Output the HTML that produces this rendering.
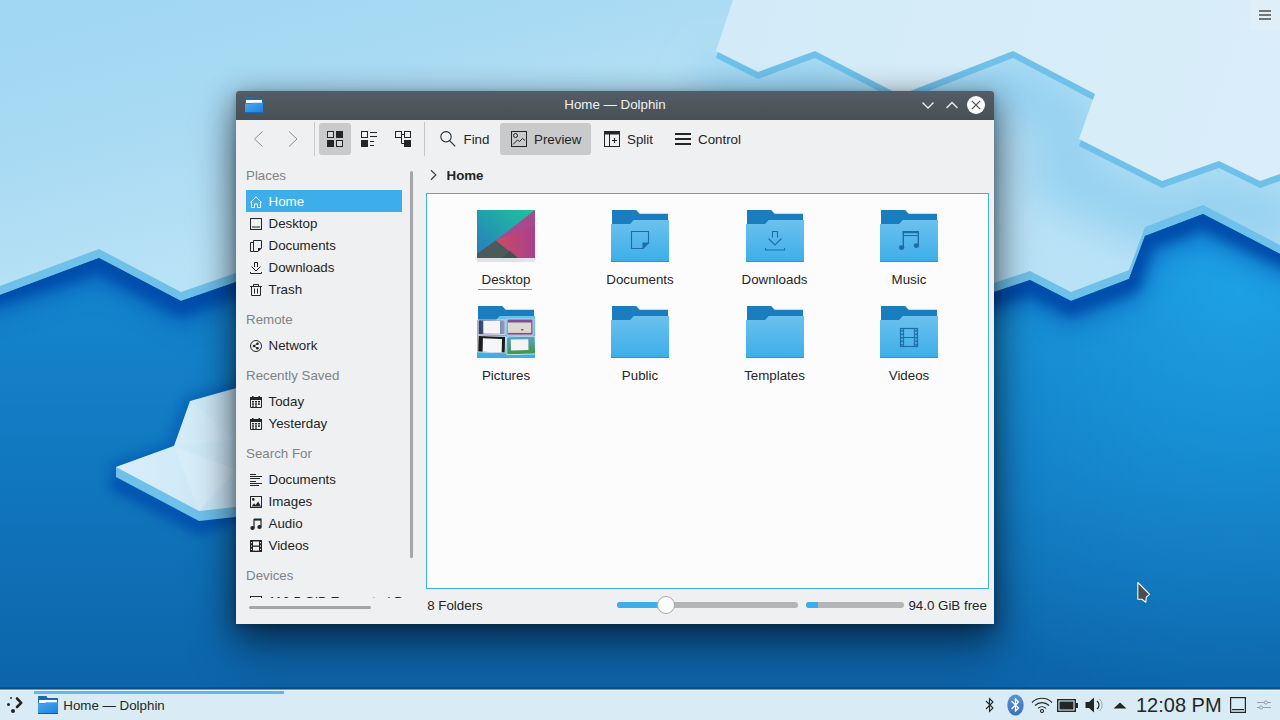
<!DOCTYPE html>
<html><head><meta charset="utf-8">
<style>
*{margin:0;padding:0;box-sizing:border-box}
html,body{width:1280px;height:720px;overflow:hidden;background:#1185d0}
body{position:relative;font-family:"Liberation Sans",sans-serif;font-size:13.33px;color:#232627}
.abs{position:absolute}
#wall{position:absolute;left:0;top:0}
#win{position:absolute;left:236px;top:91px;width:758px;height:533px;background:#eff0f1;border-radius:3px 3px 0 0;box-shadow:0 8px 30px 2px rgba(0,0,0,0.45),0 28px 48px rgba(0,10,30,0.35),0 2px 6px rgba(0,0,0,0.2)}
#title{position:absolute;left:0;top:0;width:758px;height:29px;background:linear-gradient(#545d65,#475057);border-radius:3px 3px 0 0}
.t{position:absolute;white-space:nowrap;line-height:16px;height:16px}
#taskbar{position:absolute;left:0;top:689px;width:1280px;height:31px;background:#d9ecf5}
</style></head><body>
<svg id="wall" width="1280" height="720" viewBox="0 0 1280 720">
<defs>
<linearGradient id="sky" gradientUnits="userSpaceOnUse" x1="0" y1="0" x2="80" y2="300">
<stop offset="0" stop-color="#a0d6f1"/><stop offset="0.5" stop-color="#a8daf3"/><stop offset="1" stop-color="#b9e2f6"/>
</linearGradient>
<linearGradient id="skyR" gradientUnits="userSpaceOnUse" x1="990" y1="60" x2="1250" y2="260">
<stop offset="0" stop-color="#a5d8f2"/><stop offset="1" stop-color="#b3def4"/>
</linearGradient>
<linearGradient id="plat" gradientUnits="userSpaceOnUse" x1="720" y1="0" x2="1280" y2="180">
<stop offset="0" stop-color="#d3ebf8"/><stop offset="1" stop-color="#d9eef9"/>
</linearGradient>
<linearGradient id="sea" gradientUnits="userSpaceOnUse" x1="0" y1="260" x2="0" y2="690">
<stop offset="0" stop-color="#1489d2"/><stop offset="1" stop-color="#0e6cb4"/>
</linearGradient>
<linearGradient id="seaV" gradientUnits="userSpaceOnUse" x1="0" y1="250" x2="0" y2="690">
<stop offset="0" stop-color="#000" stop-opacity="0"/><stop offset="0.5" stop-color="#002a5a" stop-opacity="0.04"/><stop offset="1" stop-color="#002a5a" stop-opacity="0.12"/>
</linearGradient>
<radialGradient id="seaRight" gradientUnits="userSpaceOnUse" cx="1240" cy="290" r="420">
<stop offset="0" stop-color="#1ea3e7" stop-opacity="0.95"/><stop offset="0.5" stop-color="#1c9de2" stop-opacity="0.5"/><stop offset="1" stop-color="#1c9de2" stop-opacity="0"/>
</radialGradient>
<linearGradient id="floe" gradientUnits="userSpaceOnUse" x1="116" y1="0" x2="236" y2="0">
<stop offset="0" stop-color="#daeefa"/><stop offset="1" stop-color="#c8e6f6"/>
</linearGradient>
<clipPath id="seaclip"><polygon points="0,295 99,258 181,301 236,282 600,259 994,292 1030,280 1071,301 1129,279 1145,236 1203,214 1280,254 1280,720 0,720"/></clipPath>
<filter id="blur12" filterUnits="userSpaceOnUse" x="-100" y="0" width="1480" height="720"><feGaussianBlur stdDeviation="12"/></filter>
<filter id="blur20" filterUnits="userSpaceOnUse" x="-100" y="-100" width="1480" height="920"><feGaussianBlur stdDeviation="20"/></filter>
<filter id="blur6" filterUnits="userSpaceOnUse" x="-100" y="0" width="1480" height="720"><feGaussianBlur stdDeviation="6"/></filter>
</defs>
<rect width="1280" height="720" fill="url(#sky)"/>
<polyline fill="none" stroke="#96d1f0" stroke-width="60" stroke-linejoin="round" filter="url(#blur20)" points="700,85 758,105 815,84 900,128 1013,84 1070,120 1060,175 1162,220 1219,200 1260,220 1300,212"/>
<!-- upper plateau band + surface -->
<polygon fill="#6fc1ea" points="733,7 1280,7 1280,181 1260,188 1219,168 1162,188 1079,146 1095,101 1013,58 900,102 815,58 758,79 716,58"/>
<polygon fill="url(#plat)" points="733,0 1280,0 1280,174 1260,181 1219,161 1162,181 1079,139 1095,94 1013,51 900,95 815,51 758,72 716,51"/>
<!-- sea band -->
<polygon fill="#6fc1ea" points="0,286 99,249 181,292 236,273 600,250 994,283 1030,271 1071,292 1129,270 1145,227 1203,205 1280,245 1280,720 0,720"/>
<g clip-path="url(#seaclip)">
<rect x="0" y="200" width="1280" height="520" fill="url(#sea)"/>
<rect x="0" y="200" width="1280" height="520" fill="url(#seaRight)"/>
<rect x="0" y="200" width="1280" height="520" fill="url(#seaV)"/>
<polyline fill="none" stroke="#0449a8" stroke-width="22" filter="url(#blur6)" points="-20,300 99,262 181,305 236,286 600,263 994,296 1030,284 1071,305 1129,283 1145,240 1203,218 1300,264"/><polyline fill="none" stroke="#0552b0" stroke-width="30" opacity="0.5" filter="url(#blur12)" points="-20,305 99,268 181,311 236,292 600,269 994,302 1030,290 1071,311 1129,289 1145,246 1203,224 1300,270"/>
<polyline fill="none" stroke="#0650ad" stroke-width="18" filter="url(#blur6)" opacity="0.9" points="112,480 199,525 300,492"/><polyline fill="none" stroke="#0650ad" stroke-width="14" filter="url(#blur6)" opacity="0.55" points="112,470 174,448 190,403 300,372"/>
</g>
<!-- floe -->
<polygon fill="#6fc1ea" points="116,467 116,477 199,521 300,510 300,420 174,446"/>
<polygon fill="url(#floe)" points="116,467 174,446 190,401 300,370 300,500 199,511"/><polygon fill="#ffffff" opacity="0.18" points="174,446 236,470 199,511"/><polygon fill="#ffffff" opacity="0.1" points="174,446 190,401 236,440"/>
</svg>

<!-- top right toolbox -->
<div class="abs" style="left:1250px;top:0;width:30px;height:30px;background:rgba(225,238,246,0.75)"></div>
<div class="abs" style="left:1259px;top:10px;width:12px;height:2px;background:#6e7579"></div>
<div class="abs" style="left:1259px;top:14px;width:12px;height:2px;background:#6e7579"></div>
<div class="abs" style="left:1259px;top:18px;width:12px;height:2px;background:#6e7579"></div>

<div id="win">
  <div id="title">
    <svg class="abs" style="left:9px;top:6px" width="18" height="16" viewBox="0 0 18 16">
      <defs><linearGradient id="tfi" x1="0" y1="0" x2="1" y2="1"><stop offset="0" stop-color="#4aa9ef"/><stop offset="1" stop-color="#1c7fdf"/></linearGradient></defs>
      <path d="M0,0 H8 L9,1.5 H18 V7 H0 Z" fill="#1a6fb3"/>
      <rect x="1" y="3" width="16" height="3" fill="#fcfcfc"/>
      <path d="M0,6.5 H7 L7.5,5.8 H18 V16 H0 Z" fill="url(#tfi)"/>
      <rect x="0" y="15" width="18" height="1" fill="#1a68b0"/>
    </svg>
    <div class="t" style="left:279px;width:200px;text-align:center;top:6px;color:#eff0f1">Home — Dolphin</div>
    <svg class="abs" style="left:684px;top:8px" width="16" height="14" viewBox="0 0 16 14"><path d="M2.5,3.5 L8,9 L13.5,3.5" fill="none" stroke="#eff0f1" stroke-width="1.3"/></svg>
    <svg class="abs" style="left:708px;top:8px" width="16" height="14" viewBox="0 0 16 14"><path d="M2.5,9 L8,3.5 L13.5,9" fill="none" stroke="#eff0f1" stroke-width="1.3"/></svg>
    <svg class="abs" style="left:730px;top:4px" width="20" height="20" viewBox="0 0 20 20"><circle cx="10" cy="10" r="9" fill="#fcfcfc"/><path d="M5.8,5.8 L14.2,14.2 M14.2,5.8 L5.8,14.2" stroke="#475057" stroke-width="1.2"/></svg>
  </div>
  <!-- toolbar -->
  <svg class="abs" style="left:16px;top:40px" width="14" height="16" viewBox="0 0 14 16"><path d="M10.5,0.5 L2.5,8 L10.5,15.5" fill="none" stroke="#8c8f91" stroke-width="1"/></svg>
  <svg class="abs" style="left:50px;top:40px" width="14" height="16" viewBox="0 0 14 16"><path d="M3,0.5 L11,8 L3,15.5" fill="none" stroke="#8c8f91" stroke-width="1"/></svg>
  <div class="abs" style="left:78px;top:31px;width:1px;height:34px;background:#c4c6c8"></div>
  <div class="abs" style="left:83px;top:32px;width:32px;height:32px;background:#c9cacb;border-radius:3px"></div>
  <svg class="abs" style="left:91px;top:40px" width="16" height="16" viewBox="0 0 16 16"><rect x="0.5" y="0.5" width="6" height="6" fill="#d6d7d8" stroke="#232627"/><rect x="9" y="0" width="7" height="7" fill="#232627"/><rect x="0" y="9" width="7" height="7" fill="#232627"/><rect x="9.5" y="9.5" width="6" height="6" fill="#d6d7d8" stroke="#232627"/></svg>
  <svg class="abs" style="left:125px;top:40px" width="16" height="16" viewBox="0 0 16 16"><rect x="0.5" y="0.5" width="6" height="6" fill="#eff0f1" stroke="#232627"/><rect x="0" y="9" width="7" height="7" fill="#232627"/><path d="M9,1.5 H16 M9,5.5 H16 M9,10.5 H13 M9,14.5 H13" stroke="#232627"/></svg>
  <svg class="abs" style="left:159px;top:40px" width="16" height="16" viewBox="0 0 16 16"><rect x="0.5" y="0.5" width="6" height="6" fill="#eff0f1" stroke="#232627"/><rect x="9.5" y="0.5" width="6" height="6" fill="#eff0f1" stroke="#232627"/><rect x="9" y="9" width="7" height="7" fill="#232627"/><path d="M7,3.5 H9 M6.5,3.5 V12.5 H9" fill="none" stroke="#232627"/></svg>
  <div class="abs" style="left:188px;top:31px;width:1px;height:34px;background:#c4c6c8"></div>
  <svg class="abs" style="left:204px;top:40px" width="16" height="16" viewBox="0 0 16 16"><circle cx="6" cy="5.8" r="5.2" fill="none" stroke="#232627" stroke-width="1.05"/><path d="M9.6,9.6 L15.2,15.3" stroke="#232627" stroke-width="1.1"/></svg>
<div class="t" style="left:227.5px;top:41px;">Find</div>
  <div class="abs" style="left:264px;top:32px;width:91px;height:32px;background:#c9cacb;border-radius:3px"></div>
  <svg class="abs" style="left:275px;top:40px" width="16" height="16" viewBox="0 0 16 16"><rect x="0.5" y="0.5" width="15" height="15" fill="none" stroke="#232627"/><circle cx="4.5" cy="4.5" r="2" fill="none" stroke="#232627"/><path d="M2,13.5 L6.5,9 L8.5,10.5 L11.5,7.5 L14,9.5" fill="none" stroke="#232627"/></svg>
<div class="t" style="left:298px;top:41px;">Preview</div>
  <svg class="abs" style="left:368px;top:40px" width="16" height="16" viewBox="0 0 16 16"><rect x="0.5" y="0.5" width="15" height="15" fill="none" stroke="#232627"/><rect x="0" y="0" width="16" height="3.5" fill="#232627"/><path d="M5.5,3 V16" stroke="#232627"/><path d="M10.5,7 V12 M8,9.5 H13" stroke="#232627" stroke-width="1.1"/></svg>
<div class="t" style="left:391px;top:41px;">Split</div>
  <svg class="abs" style="left:439px;top:40px" width="16" height="16" viewBox="0 0 16 16"><rect x="0" y="2" width="16" height="2" fill="#232627"/><rect x="0" y="7" width="16" height="2" fill="#232627"/><rect x="0" y="12" width="16" height="2" fill="#232627"/></svg>
<div class="t" style="left:462px;top:41px;">Control</div>
  <!-- sidebar -->
<div class="abs" style="left:0;top:0;width:170px;height:507px;overflow:hidden"><div class="t" style="left:10px;top:77px;color:#7f8385">Places</div><div class="abs" style="left:10px;top:99px;width:156px;height:22px;background:#3daee9"></div><svg class="abs" style="left:14px;top:105px" width="12" height="12" viewBox="0 0 12 12"><path d="M0.5,6.5 L6,0.8 L11.5,6.5 M1.5,5.5 V11.5 H4.5 V8 H7.5 V11.5 H10.5 V5.5" fill="none" stroke="#fcfcfc" stroke-width="1"/></svg><div class="t" style="left:32.5px;top:103px;color:#fcfcfc">Home</div><svg class="abs" style="left:14px;top:127px" width="12" height="12" viewBox="0 0 12 12"><rect x="0.5" y="0.5" width="11" height="11" fill="none" stroke="#232627"/><rect x="2" y="8.5" width="8" height="1" fill="#232627"/></svg><div class="t" style="left:32.5px;top:125px;color:#232627">Desktop</div><svg class="abs" style="left:14px;top:149px" width="12" height="12" viewBox="0 0 12 12"><path d="M0.5,2.5 H3 M0.5,2.5 V11.5 H3.5" fill="none" stroke="#232627"/><path d="M3.5,0.5 H11.5 V8 L8,11.5 H3.5 Z" fill="none" stroke="#232627"/><path d="M11.5,8 L8,11.5 V8 Z" fill="#232627"/></svg><div class="t" style="left:32.5px;top:147px;color:#232627">Documents</div><svg class="abs" style="left:14px;top:171px" width="12" height="12" viewBox="0 0 12 12"><path d="M4.5,0.5 H7.5 V5 M4.5,0.5 V5 M1.5,4.5 L6,9 L10.5,4.5 M0.5,10 V11.5 H11.5 V10" fill="none" stroke="#232627"/></svg><div class="t" style="left:32.5px;top:169px;color:#232627">Downloads</div><svg class="abs" style="left:14px;top:193px" width="12" height="12" viewBox="0 0 12 12"><path d="M0,2.5 H12 M3.5,2.5 V0.5 H8.5 V2.5 M1.5,2.5 V11.5 H10.5 V2.5 M4.5,4.5 V9.5 M7.5,4.5 V9.5" fill="none" stroke="#232627"/></svg><div class="t" style="left:32.5px;top:191px;color:#232627">Trash</div><div class="t" style="left:10px;top:221px;color:#7f8385">Remote</div><svg class="abs" style="left:14px;top:249px" width="12" height="12" viewBox="0 0 12 12"><circle cx="6" cy="6" r="5.5" fill="none" stroke="#232627"/><circle cx="4" cy="6" r="1.3" fill="#232627"/><circle cx="7.5" cy="3.8" r="1.3" fill="#232627"/><circle cx="7.5" cy="8.2" r="1.3" fill="#232627"/><path d="M4,6 L7.5,3.8 M4,6 L7.5,8.2" stroke="#232627" stroke-width="0.8"/></svg><div class="t" style="left:32.5px;top:247px;color:#232627">Network</div><div class="t" style="left:10px;top:277px;color:#7f8385">Recently Saved</div><svg class="abs" style="left:14px;top:305px" width="12" height="12" viewBox="0 0 12 12"><path d="M0.5,1.5 H11.5 V11.5 H0.5 Z" fill="none" stroke="#232627"/><rect x="0" y="1" width="12" height="3" fill="#232627"/><rect x="2" y="0" width="1.5" height="2" fill="#232627"/><rect x="8.5" y="0" width="1.5" height="2" fill="#232627"/><g fill="#232627"><rect x="2" y="5" width="2" height="1.5"/><rect x="5" y="5" width="2" height="1.5"/><rect x="8" y="5" width="2" height="1.5"/><rect x="2" y="7.3" width="2" height="1.5"/><rect x="5" y="7.3" width="2" height="1.5"/><rect x="8" y="7.3" width="2" height="1.5"/><rect x="2" y="9.5" width="2" height="1.2"/><rect x="5" y="9.5" width="2" height="1.2"/></g></svg><div class="t" style="left:32.5px;top:303px;color:#232627">Today</div><svg class="abs" style="left:14px;top:327px" width="12" height="12" viewBox="0 0 12 12"><path d="M0.5,1.5 H11.5 V11.5 H0.5 Z" fill="none" stroke="#232627"/><rect x="0" y="1" width="12" height="3" fill="#232627"/><rect x="2" y="0" width="1.5" height="2" fill="#232627"/><rect x="8.5" y="0" width="1.5" height="2" fill="#232627"/><g fill="#232627"><rect x="2" y="5" width="2" height="1.5"/><rect x="5" y="5" width="2" height="1.5"/><rect x="8" y="5" width="2" height="1.5"/><rect x="2" y="7.3" width="2" height="1.5"/><rect x="5" y="7.3" width="2" height="1.5"/><rect x="8" y="7.3" width="2" height="1.5"/><rect x="2" y="9.5" width="2" height="1.2"/><rect x="5" y="9.5" width="2" height="1.2"/></g></svg><div class="t" style="left:32.5px;top:325px;color:#232627">Yesterday</div><div class="t" style="left:10px;top:355px;color:#7f8385">Search For</div><svg class="abs" style="left:14px;top:383px" width="12" height="12" viewBox="0 0 12 12"><path d="M0,0.5 H6 M0,2.5 H12 M0,4.5 H10 M0,7.5 H6 M0,9.5 H12 M0,11.5 H9" stroke="#232627" fill="none"/></svg><div class="t" style="left:32.5px;top:381px;color:#232627">Documents</div><svg class="abs" style="left:14px;top:405px" width="12" height="12" viewBox="0 0 12 12"><rect x="0.5" y="0.5" width="11" height="11" fill="none" stroke="#232627"/><circle cx="3.3" cy="3.4" r="1.3" fill="#232627"/><path d="M1.5,10.5 L4,7.3 L5.6,9 L8.2,5.5 L11,10.5 Z" fill="#232627"/></svg><div class="t" style="left:32.5px;top:403px;color:#232627">Images</div><svg class="abs" style="left:14px;top:427px" width="12" height="12" viewBox="0 0 12 12"><path d="M4,1 H11 V9 M4,1 V10" stroke="#232627" fill="none" stroke-width="1.2"/><rect x="4" y="1" width="7" height="1.6" fill="#232627"/><ellipse cx="2.5" cy="10" rx="2.2" ry="1.9" fill="#232627"/><ellipse cx="9.5" cy="9" rx="2.2" ry="1.9" fill="#232627"/></svg><div class="t" style="left:32.5px;top:425px;color:#232627">Audio</div><svg class="abs" style="left:14px;top:449px" width="12" height="12" viewBox="0 0 12 12"><rect x="0" y="0" width="12" height="12" fill="#232627"/><rect x="3" y="1.5" width="6" height="4" fill="#eff0f1"/><rect x="3" y="6.8" width="6" height="3.8" fill="#eff0f1"/><g fill="#eff0f1"><rect x="1" y="2" width="1" height="1.2"/><rect x="1" y="5.4" width="1" height="1.2"/><rect x="1" y="8.8" width="1" height="1.2"/><rect x="10" y="2" width="1" height="1.2"/><rect x="10" y="5.4" width="1" height="1.2"/><rect x="10" y="8.8" width="1" height="1.2"/></g></svg><div class="t" style="left:32.5px;top:447px;color:#232627">Videos</div><div class="t" style="left:10px;top:477px;color:#7f8385">Devices</div><svg class="abs" style="left:14px;top:505px" width="12" height="12" viewBox="0 0 12 12"><rect x="0.5" y="0.5" width="11" height="11" fill="none" stroke="#232627"/></svg><div class="t" style="left:32.5px;top:503px;">116.5 GiB Encrypted Drive</div></div>
  <div class="abs" style="left:174px;top:80px;width:3px;height:387px;background:#a4a6a8;border-radius:1.5px"></div>
  <div class="abs" style="left:13px;top:514.5px;width:122px;height:3px;background:#a4a6a8;border-radius:1.5px"></div>
  <!-- breadcrumb -->
  <svg class="abs" style="left:193px;top:78px" width="8" height="12" viewBox="0 0 8 12"><path d="M2,1.2 L6.8,5.9 L2,10.7" fill="none" stroke="#3c3f41" stroke-width="1.25"/></svg>
<div class="t" style="left:210.5px;top:77px;font-weight:bold">Home</div>
  <!-- content -->
  <div class="abs" style="left:190px;top:102px;width:563px;height:396px;background:#fcfcfc;border:1px solid #3daee9"></div>
  <svg width="0" height="0" style="position:absolute"><defs><linearGradient id="fg" x1="0" y1="0" x2="0" y2="1"><stop offset="0" stop-color="#6cc1ee"/><stop offset="1" stop-color="#3caee9"/></linearGradient></defs></svg>
  <svg class="abs" style="left:241px;top:119px" width="58" height="52" viewBox="0 0 58 52">
    <defs><linearGradient id="tl" x1="0" y1="1" x2="1" y2="0"><stop offset="0" stop-color="#2a78c2"/><stop offset="1" stop-color="#1cc69a"/></linearGradient>
    <linearGradient id="pk" x1="0" y1="0" x2="1" y2="0"><stop offset="0" stop-color="#d04a60"/><stop offset="1" stop-color="#a8418e"/></linearGradient></defs>
    <rect width="58" height="48" fill="url(#tl)"/>
    <polygon points="58,0 17.5,31.4 58,19" fill="#a9488e"/>
    <polygon points="18.8,30.4 58,15.4 58,48 40.9,48" fill="url(#pk)"/>
    <polygon points="0,43.75 18.8,30.4 40.9,48 0,48" fill="#4d5a5a"/>
    <polygon points="25,48 33,41 40.9,48" fill="#43504f"/>
    <rect y="48" width="58" height="4" fill="#dfe3e4"/>
    <rect x="46" y="49" width="12" height="3" fill="#f0e0ee"/>
  </svg>
<svg class="abs" style="left:375px;top:119px" width="58" height="52" viewBox="0 0 58 52">
<polygon fill="#1a7dbd" points="1,0 25.2,0 28.6,3.8 57,3.8 57,14 1,14"/>
<polygon fill="url(#fg)" points="0,14 19,14 22.8,10 58,10 58,52 0,52"/>
<rect x="0" y="51" width="58" height="1" fill="#2b95d6"/><g fill="none" stroke="#1d6ea6" stroke-width="1.1"><path d="M20.5,21.5 H37.5 V33 L32,38.5 H20.5 Z"/><path d="M37.5,33 H32 V38.5" fill="#1d6ea6"/></g></svg><svg class="abs" style="left:509.5px;top:119px" width="58" height="52" viewBox="0 0 58 52">
<polygon fill="#1a7dbd" points="1,0 25.2,0 28.6,3.8 57,3.8 57,14 1,14"/>
<polygon fill="url(#fg)" points="0,14 19,14 22.8,10 58,10 58,52 0,52"/>
<rect x="0" y="51" width="58" height="1" fill="#2b95d6"/><g fill="none" stroke="#1d6ea6" stroke-width="1.1"><path d="M26.5,27.5 V21.5 H31.5 V27.5"/><path d="M22.5,28.5 L29,35 L35.5,28.5"/><path d="M19.5,38 V40 H38.5 V38"/></g></svg><svg class="abs" style="left:644px;top:119px" width="58" height="52" viewBox="0 0 58 52">
<polygon fill="#1a7dbd" points="1,0 25.2,0 28.6,3.8 57,3.8 57,14 1,14"/>
<polygon fill="url(#fg)" points="0,14 19,14 22.8,10 58,10 58,52 0,52"/>
<rect x="0" y="51" width="58" height="1" fill="#2b95d6"/><g fill="#1d6ea6"><rect x="22.6" y="21" width="16.4" height="2.2"/><rect x="22.6" y="21" width="1.4" height="16.5"/><rect x="37.6" y="21" width="1.4" height="14.5"/><rect x="24" y="25" width="13.6" height="1.1"/><ellipse cx="21.6" cy="37.6" rx="2.7" ry="2.3"/><ellipse cx="36.4" cy="35.6" rx="2.7" ry="2.3"/></g></svg>
  <svg class="abs" style="left:241px;top:215px" width="58" height="52" viewBox="0 0 58 52">
    <polygon fill="#1a7dbd" points="1,0 25.2,0 28.6,3.8 57,3.8 57,14 1,14"/>
    <polygon fill="url(#fg)" points="0,14 19,14 22.8,10 58,10 58,52 0,52"/>
    <defs><linearGradient id="pq1" x1="0" y1="0" x2="1" y2="0"><stop offset="0" stop-color="#2f3f6a"/><stop offset="1" stop-color="#8e9ec4"/></linearGradient>
    <linearGradient id="pq4" x1="0" y1="0" x2="0" y2="1"><stop offset="0" stop-color="#5a9fd0"/><stop offset="1" stop-color="#3f9a3c"/></linearGradient></defs>
    <rect x="0.9" y="13.6" width="27.5" height="15.4" fill="#e8eaf0"/>
    <rect x="1.6" y="14.3" width="26.1" height="14" fill="url(#pq1)"/>
    <rect x="6.3" y="14.8" width="16.7" height="12.9" fill="#f5f5f5"/>
    <rect x="29.7" y="12.75" width="26.6" height="16.65" fill="#f0f0f0"/>
    <rect x="30.4" y="13.4" width="25.2" height="15.3" fill="#7d4f93"/>
    <rect x="30.9" y="16.5" width="23.3" height="10.4" fill="#dcd8d2"/>
    <rect x="44" y="23" width="2.5" height="1.5" fill="#d04040"/>
    <polygon points="0.9,29.4 28.8,30.4 28.4,47.3 0.5,46.3" fill="#f2f2f2"/>
    <polygon points="1.6,30.1 28.1,31.1 27.7,46.6 1.2,45.6" fill="#1a1c1e"/>
    <polygon points="5.9,32.3 25,33 24.7,46.5 5.6,45.8" fill="#f6f6f6"/>
    <polygon points="29.25,30.7 58.4,29.9 58.8,48.2 29.6,49" fill="#f2f2f2"/>
    <polygon points="29.95,31.4 57.7,30.6 58.1,47.5 30.3,48.3" fill="url(#pq4)"/>
    <polygon points="33.8,33.6 51.3,33.2 51.5,44 34,44.4" fill="#f4f4f4"/>
  </svg>
<svg class="abs" style="left:375px;top:215px" width="58" height="52" viewBox="0 0 58 52">
<polygon fill="#1a7dbd" points="1,0 25.2,0 28.6,3.8 57,3.8 57,14 1,14"/>
<polygon fill="url(#fg)" points="0,14 19,14 22.8,10 58,10 58,52 0,52"/>
<rect x="0" y="51" width="58" height="1" fill="#2b95d6"/></svg><svg class="abs" style="left:509.5px;top:215px" width="58" height="52" viewBox="0 0 58 52">
<polygon fill="#1a7dbd" points="1,0 25.2,0 28.6,3.8 57,3.8 57,14 1,14"/>
<polygon fill="url(#fg)" points="0,14 19,14 22.8,10 58,10 58,52 0,52"/>
<rect x="0" y="51" width="58" height="1" fill="#2b95d6"/></svg><svg class="abs" style="left:644px;top:215px" width="58" height="52" viewBox="0 0 58 52">
<polygon fill="#1a7dbd" points="1,0 25.2,0 28.6,3.8 57,3.8 57,14 1,14"/>
<polygon fill="url(#fg)" points="0,14 19,14 22.8,10 58,10 58,52 0,52"/>
<rect x="0" y="51" width="58" height="1" fill="#2b95d6"/><g fill="none" stroke="#1d6ea6" stroke-width="1.2"><rect x="20.5" y="22.5" width="17" height="18"/><path d="M23.5,22.5 V40.5 M34.5,22.5 V40.5 M23.5,31.5 H34.5"/></g><g fill="#1d6ea6"><rect x="21" y="24" width="1.6" height="1.6"/><rect x="21" y="27.5" width="1.6" height="1.6"/><rect x="21" y="31" width="1.6" height="1.6"/><rect x="21" y="34.5" width="1.6" height="1.6"/><rect x="21" y="38" width="1.6" height="1.6"/><rect x="35.4" y="24" width="1.6" height="1.6"/><rect x="35.4" y="27.5" width="1.6" height="1.6"/><rect x="35.4" y="31" width="1.6" height="1.6"/><rect x="35.4" y="34.5" width="1.6" height="1.6"/><rect x="35.4" y="38" width="1.6" height="1.6"/></g></svg>
<div class="t" style="left:210px;width:120px;text-align:center;top:181px;">Desktop</div><div class="t" style="left:344px;width:120px;text-align:center;top:181px;">Documents</div><div class="t" style="left:478.5px;width:120px;text-align:center;top:181px;">Downloads</div><div class="t" style="left:613px;width:120px;text-align:center;top:181px;">Music</div>
  <div class="abs" style="left:242px;top:198px;width:54px;height:1px;background:#3daee9"></div>
<div class="t" style="left:210px;width:120px;text-align:center;top:277px;">Pictures</div><div class="t" style="left:344px;width:120px;text-align:center;top:277px;">Public</div><div class="t" style="left:478.5px;width:120px;text-align:center;top:277px;">Templates</div><div class="t" style="left:613px;width:120px;text-align:center;top:277px;">Videos</div>
  <!-- status bar -->
<div class="t" style="left:191.2px;top:507px;">8 Folders</div>
  <div class="abs" style="left:381px;top:511px;width:181px;height:5.5px;background:#b4b5b6;border-radius:3px"></div>
  <div class="abs" style="left:381px;top:511px;width:50px;height:5.5px;background:#3daee9;border-radius:3px 0 0 3px"></div>
  <div class="abs" style="left:420.6px;top:505px;width:18px;height:18px;background:#fcfcfc;border:1px solid #a6a8aa;border-radius:50%"></div>
  <div class="abs" style="left:570px;top:511px;width:98px;height:5.5px;background:#b4b5b6;border-radius:3px"></div>
  <div class="abs" style="left:570px;top:511px;width:12px;height:5.5px;background:#3daee9;border-radius:3px 0 0 3px"></div>
<div class="t" style="left:672.4px;top:507px;">94.0 GiB free</div>
</div>
<div id="taskbar">
  <div class="abs" style="left:0;top:-2px;width:1280px;height:3px;background:linear-gradient(rgba(0,20,50,0.15),rgba(0,20,50,0.45))"></div><div class="abs" style="left:0;top:1px;width:1280px;height:1px;background:rgba(255,255,255,0.35)"></div>
  <div class="abs" style="left:34px;top:2px;width:250px;height:3px;background:#62b8e8"></div>
  <svg class="abs" style="left:5px;top:7px" width="20" height="18" viewBox="0 0 20 18">
    <circle cx="6" cy="2" r="1" fill="#232627"/><circle cx="3.5" cy="8.5" r="1.5" fill="#232627"/><circle cx="8" cy="15" r="2" fill="#232627"/>
    <path d="M12,2.5 L16.2,6.8 L12,11" fill="none" stroke="#232627" stroke-width="2.6" stroke-linecap="round" stroke-linejoin="round"/>
  </svg>
  <svg class="abs" style="left:38px;top:7px" width="20" height="18" viewBox="0 0 20 18">
    <defs><linearGradient id="tbf" x1="0" y1="0" x2="1" y2="1"><stop offset="0" stop-color="#4aa9ef"/><stop offset="1" stop-color="#1c7fdf"/></linearGradient></defs>
    <path d="M0,0 H8.5 L9.5,2 H20 V8 H0 Z" fill="#1d68a8"/>
    <rect x="1" y="4" width="18" height="3" fill="#fcfcfc"/>
    <path d="M0,7.2 H7 L7.7,6.3 H20 V18 H0 Z" fill="url(#tbf)"/>
    <rect x="0" y="17" width="20" height="1" fill="#15579a"/>
  </svg>
  <div class="t" style="left:63.3px;top:9px;color:#232627">Home — Dolphin</div>
  <!-- tray -->
  <svg class="abs" style="left:984px;top:8px" width="12" height="16" viewBox="0 0 12 16"><path d="M2,4 L9,11 L5.5,14.5 V1.5 L9,5 L2,12" fill="none" stroke="#232627" stroke-width="1.1"/></svg>
  <svg class="abs" style="left:1007px;top:5px" width="17" height="22" viewBox="0 0 17 22"><defs><linearGradient id="bt" x1="0" y1="0" x2="0" y2="1"><stop offset="0" stop-color="#5b95d6"/><stop offset="1" stop-color="#3a6fb8"/></linearGradient></defs><ellipse cx="8.5" cy="11" rx="8.2" ry="10.6" fill="url(#bt)"/><path d="M4.5,7 L11.5,14 L8.5,17 V5 L11.5,8 L4.5,15" fill="none" stroke="#fcfcfc" stroke-width="1.3"/></svg>
  <svg class="abs" style="left:1031px;top:8px" width="22" height="16" viewBox="0 0 22 16"><g fill="none" stroke="#232627" stroke-width="1.1"><path d="M1,5.5 A14,14 0 0 1 21,5.5"/><path d="M4,8.5 A10,10 0 0 1 18,8.5"/><path d="M7,11.3 A6,6 0 0 1 15,11.3"/></g><circle cx="11" cy="14" r="1.5" fill="none" stroke="#232627" stroke-width="1.1"/></svg>
  <svg class="abs" style="left:1057px;top:10px" width="22" height="13" viewBox="0 0 22 13"><rect x="0.7" y="0.7" width="17.6" height="11.6" fill="none" stroke="#232627" stroke-width="1.4"/><rect x="2.5" y="2.5" width="14" height="8" fill="#232627"/><rect x="19" y="4" width="2" height="5" fill="#232627"/></svg>
  <svg class="abs" style="left:1085px;top:8px" width="18" height="16" viewBox="0 0 18 16"><path d="M0.5,5 H4 L9,0.5 V15.5 L4,11 H0.5 Z" fill="#232627"/><path d="M12,4 A5,5 0 0 1 12,12" fill="none" stroke="#232627" stroke-width="1.2"/><path d="M14.5,2 A8,8 0 0 1 14.5,14" fill="none" stroke="#a0a4a6" stroke-width="1"/></svg>
  <svg class="abs" style="left:1113px;top:13px" width="14" height="7" viewBox="0 0 14 7"><path d="M0.5,6.5 L7,0.5 L13.5,6.5 Z" fill="#232627"/></svg>
  <div class="t" style="left:1136px;top:4px;font-size:20px;line-height:24px;height:24px;color:#232627">12:08 PM</div>
  <svg class="abs" style="left:1230px;top:8px" width="16" height="16" viewBox="0 0 16 16"><rect x="0.6" y="0.6" width="14.8" height="14.8" fill="none" stroke="#232627" stroke-width="1.2"/><rect x="2" y="12" width="12" height="1.2" fill="#232627"/></svg>
  <svg class="abs" style="left:1257px;top:10px" width="14" height="12" viewBox="0 0 14 12"><g stroke="#9a9ea1" stroke-width="1.2" fill="none"><path d="M0,3.5 H14 M0,8.5 H14"/></g><circle cx="9" cy="3.5" r="1.6" fill="#dcebf4" stroke="#9a9ea1"/><circle cx="4" cy="8.5" r="1.6" fill="#dcebf4" stroke="#9a9ea1"/></svg>
</div>
<!-- cursor -->
<svg class="abs" style="left:1136px;top:581px" width="18" height="24" viewBox="0 0 18 24"><path d="M1.8,1.5 L13.6,13.3 L10.3,16.1 L9.8,21.3 L5.8,18.3 L1.8,18.3 Z" fill="#4d4d4d" stroke="#fcfcfc" stroke-width="1.1" stroke-linejoin="round"/></svg>

</body></html>
